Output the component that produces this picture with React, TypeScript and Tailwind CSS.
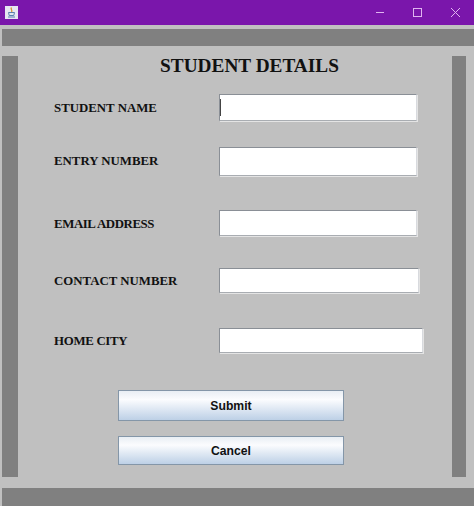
const labelCls = "w-[165px] text-[12.85px] font-bold uppercase text-[#111] [font-family:'Liberation_Serif',serif] leading-none";
const inputCls = "bg-white border border-t-[#8a8f96] border-l-[#8a8f96] border-r-[#d8dade] border-b-[#a9adb2] shadow-[1px_1px_0_#e4e4e4] shrink-0";

function Row({ label, w, h, mt, offset, caret }: { label: string; w: string; h: string; mt: string; offset: string; caret?: boolean }) {
  return (
    <div className={`flex items-start ${mt}`}>
      <div className={`${labelCls} ${offset}`}>{label}</div>
      <div className={`${inputCls} ${w} ${h} flex items-center`}>
        {caret ? <div className="w-px h-[17px] bg-[#444]" /> : null}
      </div>
    </div>
  );
}

function Btn({ label, h, mt }: { label: string; h: string; mt: string }) {
  return (
    <button className={`${h} ${mt} w-[226px] ml-[64px] pt-[2px] border border-[#8496a8] bg-gradient-to-b from-[#e9eef4] via-[#fbfcfe] via-[30%] to-[#bdd0e6] text-[12.2px] font-bold text-[#111] [font-family:'Liberation_Sans',sans-serif] flex items-center justify-center`}>
      {label}
    </button>
  );
}

export default function App() {
  return (
    <div className="w-[474px] h-[506px] bg-[#c0c0c0] overflow-hidden flex flex-col">
      <div className="h-[25px] bg-[#7a16ab] flex items-center shrink-0">
        <div className="ml-[5px] w-[13px] h-[13px] bg-[#e6e6f2] flex items-center justify-center">
          <svg width="11" height="11" viewBox="0 0 11 11">
            <path d="M5.5 0.5 C4 2.5 7 3 5.5 5" stroke="#d8902c" fill="none" strokeWidth="1.3" />
            <path d="M2.5 5.5 H8.5 L7.8 8.5 H3.2 Z" fill="#dfe6ef" stroke="#5b7fb0" strokeWidth="1" />
            <path d="M2 10 H9" stroke="#5b7fb0" strokeWidth="1" />
          </svg>
        </div>
        <div className="ml-auto flex items-center text-[#e0b4f0]">
          <svg width="46" height="25" viewBox="0 0 46 25"><path d="M22 12.5 H30" stroke="currentColor" strokeWidth="1" /></svg>
          <svg width="36" height="25" viewBox="0 0 36 25"><rect x="13.5" y="8.5" width="8" height="8" fill="none" stroke="currentColor" strokeWidth="1" /></svg>
          <svg width="38" height="25" viewBox="0 0 38 25"><path d="M15 8 L24 17 M24 8 L15 17" stroke="currentColor" strokeWidth="1" /></svg>
        </div>
      </div>

      <div className="h-[17px] mt-[4px] ml-[2px] bg-[#808080] shrink-0" />

      <div className="flex mt-[10px] h-[421px] shrink-0">
        <div className="w-[16px] ml-[2px] bg-[#808080] shrink-0" />
        <div className="w-[434px] flex flex-col">
          <h1 className="text-center text-[19.3px] font-bold uppercase leading-none text-[#111] [font-family:'Liberation_Serif',serif] pl-[29px] h-[21px]">Student Details</h1>
          <div className="pl-[36px] flex flex-col">
            <Row label="Student Name" w="w-[198px]" h="h-[27px]" mt="mt-[17px]" offset="pt-[8px]" caret />
            <Row label="Entry Number" w="w-[198px]" h="h-[29px]" mt="mt-[26px]" offset="pt-[8px]" />
            <Row label="Email Address" w="w-[198px]" h="h-[26px]" mt="mt-[34px]" offset="pt-[8px] tracking-[-0.4px]" />
            <Row label="Contact Number" w="w-[200px]" h="h-[25px]" mt="mt-[32px]" offset="pt-[7px]" />
            <Row label="Home City" w="w-[204px]" h="h-[25px]" mt="mt-[35px]" offset="pt-[7px] tracking-[-0.3px]" />
            <Btn label="Submit" h="h-[31px]" mt="mt-[37px]" />
            <Btn label="Cancel" h="h-[29px]" mt="mt-[15px]" />
          </div>
        </div>
        <div className="w-[14px] bg-[#808080] shrink-0" />
      </div>

      <div className="h-[18px] mt-[11px] ml-[2px] bg-[#808080] shrink-0" />
    </div>
  );
}
